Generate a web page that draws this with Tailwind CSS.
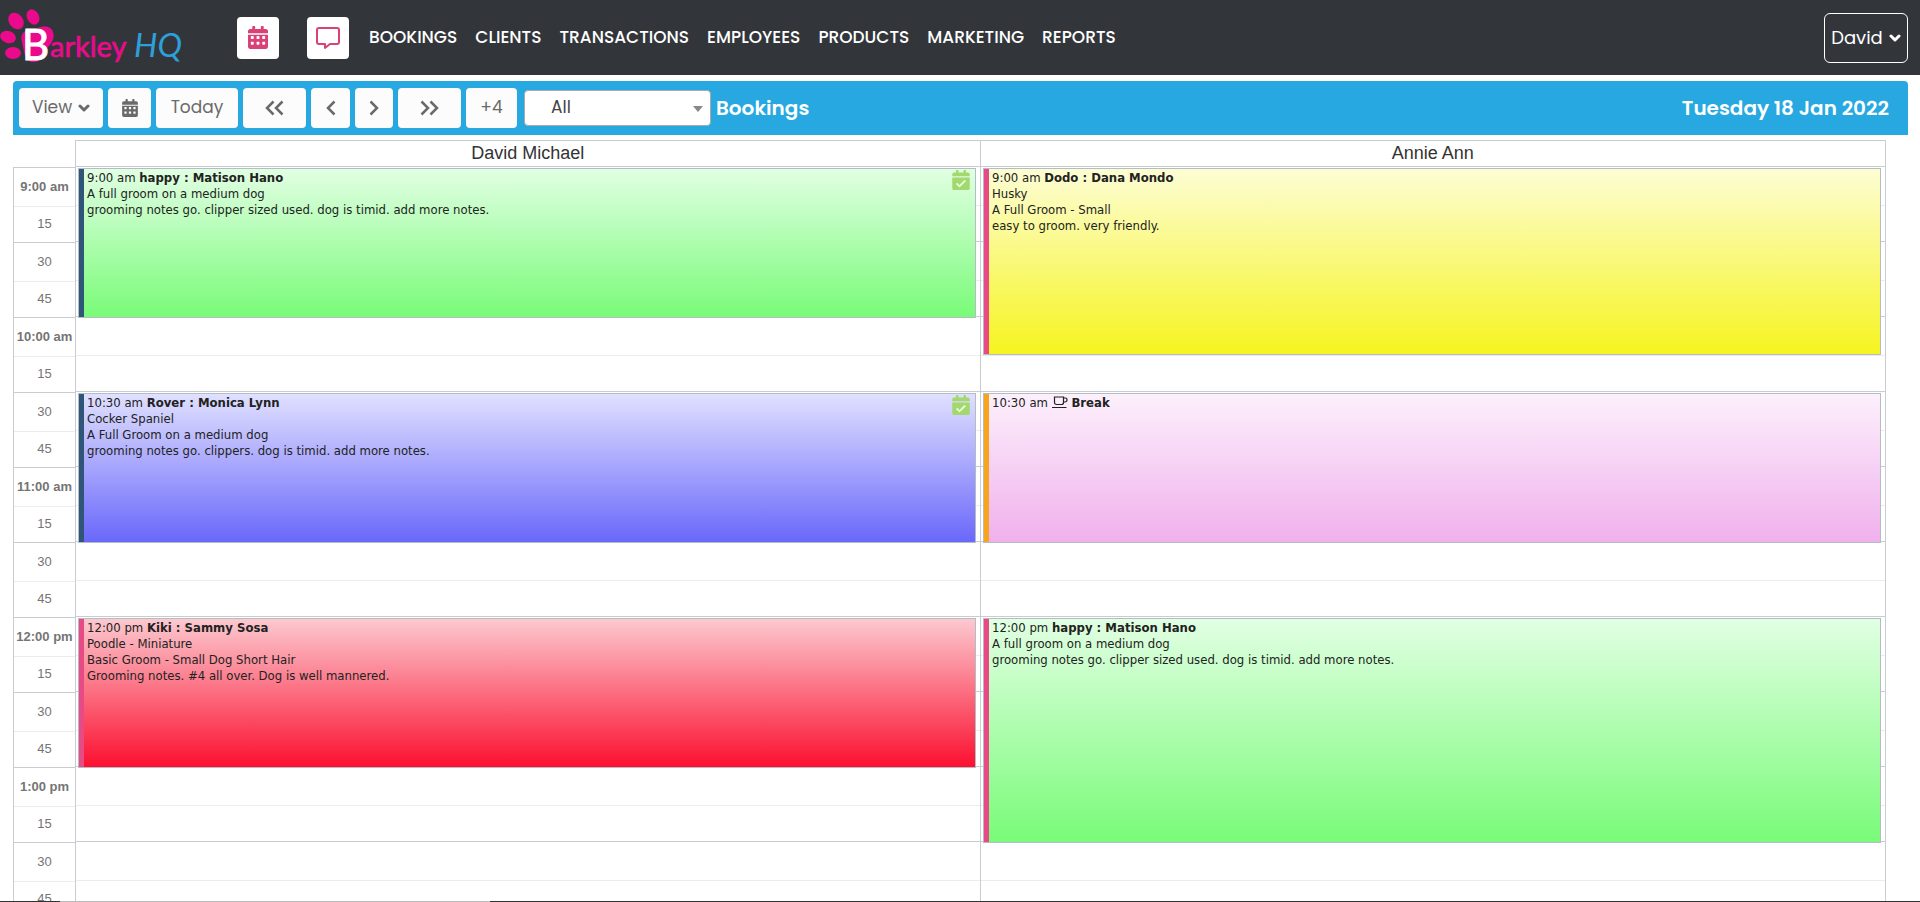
<!DOCTYPE html>
<html lang="en">
<head>
    <meta charset="UTF-8">
    <meta name="viewport" content="width=device-width, initial-scale=1.0">
    <title>Barkley HQ - Bookings</title>
    <script src="https://cdn.jsdelivr.net/npm/@tailwindcss/browser@4"></script>
</head>
<body class="h-screen overflow-hidden flex flex-col bg-white font-['Poppins','Inter',sans-serif]">

    <svg class="hidden">
        <symbol id="calendar" viewBox="0 0 448 512">
            <path fill="currentColor" fill-rule="evenodd" d="M0 464c0 26.500 21.500 48 48 48h352c26.500 0 48-21.500 48-48V192H0v272zM320 236c0-6.600 5.400-12 12-12h40c6.600 0 12 5.400 12 12v40c0 6.600-5.400 12-12 12h-40c-6.600 0-12-5.400-12-12v-40zm0 128c0-6.600 5.400-12 12-12h40c6.600 0 12 5.400 12 12v40c0 6.600-5.400 12-12 12h-40c-6.600 0-12-5.400-12-12v-40zM192 236c0-6.600 5.400-12 12-12h40c6.600 0 12 5.400 12 12v40c0 6.600-5.400 12-12 12h-40c-6.600 0-12-5.400-12-12v-40zm0 128c0-6.600 5.400-12 12-12h40c6.600 0 12 5.400 12 12v40c0 6.600-5.400 12-12 12h-40c-6.600 0-12-5.400-12-12v-40zM64 236c0-6.600 5.400-12 12-12h40c6.600 0 12 5.400 12 12v40c0 6.600-5.400 12-12 12H76c-6.600 0-12-5.400-12-12v-40zm0 128c0-6.600 5.400-12 12-12h40c6.600 0 12 5.400 12 12v40c0 6.600-5.400 12-12 12H76c-6.600 0-12-5.400-12-12v-40zM400 64h-48V16c0-8.800-7.200-16-16-16h-32c-8.800 0-16 7.200-16 16v48H160V16c0-8.800-7.200-16-16-16h-32c-8.800 0-16 7.200-16 16v48H48C21.500 64 0 85.500 0 112v48h448v-48c0-26.500-21.500-48-48-48z"/>
        </symbol>
        <symbol id="calendar-check" viewBox="0 0 448 512">
            <path fill="currentColor" d="M436 160H12c-6.600 0-12-5.400-12-12v-36c0-26.500 21.500-48 48-48h48V12c0-6.600 5.400-12 12-12h40c6.600 0 12 5.400 12 12v52h128V12c0-6.600 5.400-12 12-12h40c6.600 0 12 5.400 12 12v52h48c26.500 0 48 21.500 48 48v36c0 6.600-5.400 12-12 12zM12 192h424c6.600 0 12 5.400 12 12v260c0 26.500-21.500 48-48 48H48c-26.500 0-48-21.500-48-48V204c0-6.600 5.400-12 12-12z"/>
            <path fill="none" stroke="#e4ffe6" stroke-width="46" d="M112 345l72 72 150-148"/>
        </symbol>
        <symbol id="chevron-down" viewBox="0 0 12 8">
            <path fill="none" stroke="currentColor" stroke-width="3" stroke-linecap="round" stroke-linejoin="round" d="M2 2l4 4 4-4"/>
        </symbol>
        <symbol id="chevron-left" viewBox="0 0 10 16">
            <path fill="none" stroke="currentColor" stroke-width="2.500" d="M8.500 1.500L2 8l6.500 6.500"/>
        </symbol>
        <symbol id="chevron-right" viewBox="0 0 10 16">
            <path fill="none" stroke="currentColor" stroke-width="2.500" d="M1.500 1.500L8 8l-6.500 6.500"/>
        </symbol>
        <symbol id="coffee" viewBox="0 0 16 13">
            <path fill="none" stroke="currentColor" stroke-width="1.200" d="M2.500 1h9v5.500a2 2 0 0 1-2 2h-5a2 2 0 0 1-2-2zM11.500 2h2a1.500 1.500 0 0 1 1.500 1.500v.5a2 2 0 0 1-2 2h-1.500M0 11.500h14.500"/>
        </symbol>
    </svg>

    <header class="h-[75px] shrink-0 flex items-center bg-[#32363b] pr-3 text-white">
        <a href="#" aria-label="Barkley HQ" class="shrink-0">
            <svg class="w-[184px] h-[75px]" viewBox="0 0 184 75">
                <g fill="#ec0a8c">
                    <ellipse cx="16" cy="21" rx="7" ry="9" transform="rotate(-38 16 21)"/>
                    <ellipse cx="33" cy="17" rx="6" ry="8" transform="rotate(-28 33 17)"/>
                    <ellipse cx="8" cy="37" rx="8" ry="6" transform="rotate(18 8 37)"/>
                    <ellipse cx="13" cy="53" rx="8" ry="6"/>
                    <path d="M22 42c-3-9 4-14 12-11 5-6 17-6 19 1 2 6-1 11-5 15-3 9-8 16-16 15-7-1-8-11-10-20z"/>
                </g>
                <g font-family="Lato, sans-serif" stroke-linejoin="round">
                    <text x="22" y="60" font-size="42" fill="#fff" stroke="#fff">B</text>
                    <text x="50" y="57" font-size="29" fill="#ec0a8c" stroke="#ec0a8c" stroke-width="0.600">arkley</text>
                    <text x="134" y="57" font-size="33" font-style="italic" fill="#2e9fd9">HQ</text>
                </g>
            </svg>
        </a>
        <button type="button" aria-label="Calendar" class="ml-[53px] size-[42px] shrink-0 flex items-center justify-center rounded bg-white text-[#d94277]">
            <svg class="w-5 h-[23px]"><use href="#calendar"/></svg>
        </button>
        <button type="button" aria-label="Messages" class="ml-7 size-[42px] shrink-0 flex items-center justify-center rounded bg-white text-[#d94277]">
            <svg class="w-6 h-6" viewBox="0 0 24 24" fill="none" stroke="currentColor" stroke-width="2" stroke-linejoin="round"><path d="M3 2h18a2 2 0 0 1 2 2v12a2 2 0 0 1-2 2h-7l-5 4v-4H3a2 2 0 0 1-2-2V4a2 2 0 0 1 2-2z"/></svg>
        </button>
        <nav class="ml-5 flex gap-[18px] text-[17px] font-medium whitespace-nowrap">
            <a href="#">BOOKINGS</a>
            <a href="#">CLIENTS</a>
            <a href="#">TRANSACTIONS</a>
            <a href="#">EMPLOYEES</a>
            <a href="#">PRODUCTS</a>
            <a href="#">MARKETING</a>
            <a href="#">REPORTS</a>
        </nav>
        <button type="button" class="ml-auto h-[50px] w-[84px] shrink-0 flex items-center justify-center gap-1.5 rounded-md border border-white text-lg">
            David <svg class="w-3 h-2"><use href="#chevron-down"/></svg>
        </button>
    </header>

    <div class="mt-1.5 ml-[13px] mr-3 h-[54px] shrink-0 flex items-center gap-[5px] rounded-t bg-[#27a8e0] pl-1.5 pr-[19px] text-[17px] text-[#6a6a6a]">
        <button type="button" class="h-10 w-[84px] flex items-center justify-center gap-1.5 rounded bg-[#fcfcfc]">
            View <svg class="w-3 h-2"><use href="#chevron-down"/></svg>
        </button>
        <button type="button" aria-label="Pick date" class="h-10 w-[43px] flex items-center justify-center rounded bg-[#fcfcfc]">
            <svg class="w-4 h-[18px]"><use href="#calendar"/></svg>
        </button>
        <button type="button" class="h-10 w-[82px] rounded bg-[#fcfcfc]">Today</button>
        <button type="button" aria-label="Previous week" class="h-10 w-[63px] flex items-center justify-center rounded bg-[#fcfcfc]">
            <svg class="w-[10px] h-4"><use href="#chevron-left"/></svg><svg class="-ml-px w-[10px] h-4"><use href="#chevron-left"/></svg>
        </button>
        <button type="button" aria-label="Previous day" class="h-10 w-[39px] flex items-center justify-center rounded bg-[#fcfcfc]">
            <svg class="w-[10px] h-4"><use href="#chevron-left"/></svg>
        </button>
        <button type="button" aria-label="Next day" class="h-10 w-[38px] flex items-center justify-center rounded bg-[#fcfcfc]">
            <svg class="w-[10px] h-4"><use href="#chevron-right"/></svg>
        </button>
        <button type="button" aria-label="Next week" class="h-10 w-[63px] flex items-center justify-center rounded bg-[#fcfcfc]">
            <svg class="w-[10px] h-4"><use href="#chevron-right"/></svg><svg class="-ml-px w-[10px] h-4"><use href="#chevron-right"/></svg>
        </button>
        <button type="button" class="h-10 w-[51px] rounded bg-[#fcfcfc]">+4</button>
        <div class="relative ml-0.5">
            <select aria-label="Employee" class="block h-9 w-[187px] appearance-none rounded border border-[#aaa] bg-white pl-[26px] text-[#444]">
                <option>All</option>
            </select>
            <span class="pointer-events-none absolute right-2 top-4 border-x-5 border-t-6 border-x-transparent border-t-[#888]"></span>
        </div>
        <h1 class="text-xl font-semibold text-white">Bookings</h1>
        <p class="ml-auto text-xl font-semibold text-white">Tuesday 18 Jan 2022</p>
    </div>

    <main class="mt-[5px] ml-[13px] mr-[34px] min-h-0 flex-1 overflow-hidden font-['Liberation_Sans',Arial,sans-serif]">
        <div class="ml-[62px] h-[27px] grid grid-cols-2 border border-[#c9cdd2] text-center text-lg leading-[25px] text-[#333]">
            <h2 class="border-r border-[#c9cdd2]">David Michael</h2>
            <h2>Annie Ann</h2>
        </div>
        <div class="flex">
            <div id="times" class="w-[62px] shrink-0 border-l border-t border-[#c9cdd2] text-center text-[13px] text-[#757575]"></div>
            <div id="columns" class="flex-1 grid grid-cols-2 border-l border-[#c9cdd2]"></div>
        </div>
    </main>
    <div class="h-px shrink-0 flex bg-[#333]">
        <div class="ml-[60px] w-[430px] bg-[#bbb]"></div>
    </div>

    <script>
        const HOUR = 150;
        const hours = ["9:00 am", "10:00 am", "11:00 am", "12:00 pm", "1:00 pm"];

        // start and length are in hours, start counts from 9:00 am
        const columns = [
            [
                { start: 0, length: 1, time: "9:00 am", title: "happy : Matison Hano", check: true, bar: "bg-[#2f5578]", fill: "from-[#e1ffe3] to-[#79fb78]",
                  lines: ["A full groom on a medium dog", "grooming notes go. clipper sized used. dog is timid. add more notes."] },
                { start: 1.5, length: 1, time: "10:30 am", title: "Rover : Monica Lynn", check: true, bar: "bg-[#2f5578]", fill: "from-[#e0e0ff] to-[#6a68fa]",
                  lines: ["Cocker Spaniel", "A Full Groom on a medium dog", "grooming notes go. clippers. dog is timid. add more notes."] },
                { start: 3, length: 1, time: "12:00 pm", title: "Kiki : Sammy Sosa", bar: "bg-[#e84a85]", fill: "from-[#fcc9cf] to-[#fb1030]",
                  lines: ["Poodle - Miniature", "Basic Groom - Small Dog Short Hair", "Grooming notes. #4 all over. Dog is well mannered."] },
            ],
            [
                { start: 0, length: 1.25, time: "9:00 am", title: "Dodo : Dana Mondo", bar: "bg-[#e84a85]", fill: "from-[#fdfdd4] to-[#f6f41f]",
                  lines: ["Husky", "A Full Groom - Small", "easy to groom. very friendly."] },
                { start: 1.5, length: 1, time: "10:30 am", title: "Break", coffee: true, bar: "bg-[#f7a51c]", fill: "from-[#fcf0fc] to-[#f0b0ec]", lines: [] },
                { start: 3, length: 1.5, time: "12:00 pm", title: "happy : Matison Hano", bar: "bg-[#e84a85]", fill: "from-[#e1ffe3] to-[#79fb78]",
                  lines: ["A full groom on a medium dog", "grooming notes go. clipper sized used. dog is timid. add more notes."] },
            ],
        ];

        const light = "h-[39px] border-b border-[#ececec]";
        const dark = "h-9 border-b border-[#c9cdd2]";

        document.getElementById("times").innerHTML = hours.map(hour => `
            <div class="${light} leading-[38px] font-bold whitespace-nowrap">${hour}</div>
            <div class="${dark} leading-[34px]">15</div>
            <div class="${light} leading-[38px]">30</div>
            <div class="${dark} leading-[34px]">45</div>
        `).join("");

        function eventCard(e) {
            const top = 1 + e.start * HOUR;
            const height = Math.floor(e.length * HOUR);
            return `
                <article class="absolute left-0.5 right-1 flex border border-[#b4bcc6] bg-linear-to-b/srgb ${e.fill}" style="top:${top}px;height:${height}px">
                    <div class="w-[5px] shrink-0 ${e.bar}"></div>
                    <div class="flex-1 pl-[3px] pt-px">
                        <p>${e.time} ${e.coffee ? '<svg class="inline w-4 h-[13px] align-[-2px]"><use href="#coffee"/></svg> ' : ""}<b>${e.title}</b></p>
                        ${e.lines.map(line => `<p>${line}</p>`).join("")}
                    </div>
                    ${e.check ? '<svg class="mt-px mr-[5px] w-[18px] h-5 text-[#a3d86c]"><use href="#calendar-check"/></svg>' : ""}
                </article>`;
        }

        document.getElementById("columns").innerHTML = columns.map(events => `
            <section class="relative border-r border-[#c9cdd2] text-[13px] leading-4 text-[#222] font-['DejaVu_Sans_Condensed','DejaVu_Sans',sans-serif]">
                ${hours.map(() => `<div class="${light}"></div><div class="${dark}"></div><div class="${light}"></div><div class="${dark}"></div>`).join("")}
                ${events.map(eventCard).join("")}
            </section>
        `).join("");
    </script>

</body>
</html>
